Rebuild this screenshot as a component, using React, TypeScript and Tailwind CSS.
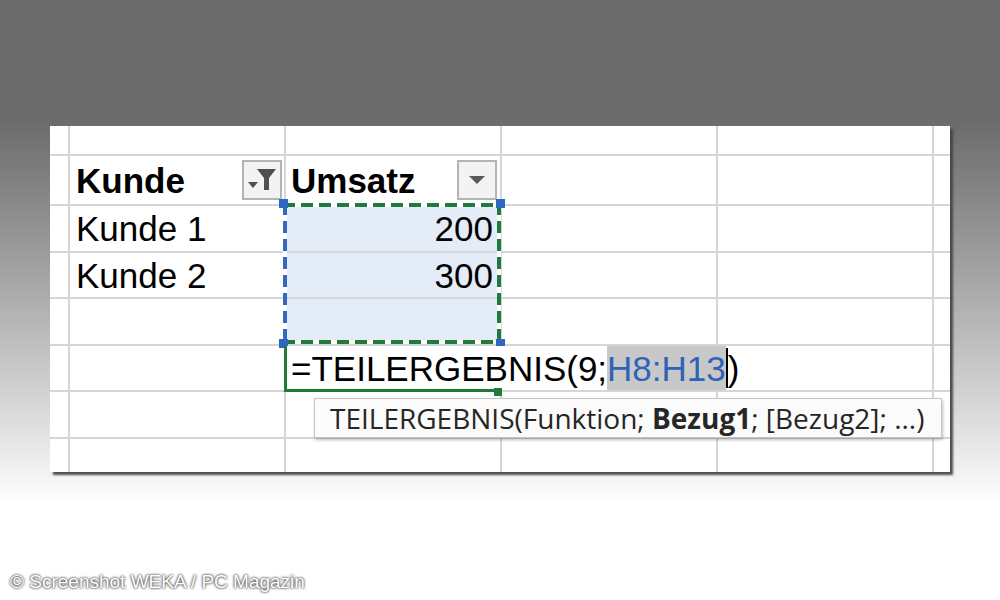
import React from "react";

// Excel-like sheet excerpt on a fading gray backdrop
const rowHeights = [28, 48, 45, 44, 45, 44, 45, 33];
const cols = 6;

const FilterButton = ({ filtered }: { filtered?: boolean }) => (
  <div className="flex h-[40px] w-[40px] shrink-0 items-center justify-center border-2 border-[#b4b4b4] bg-[#f3f3f3]">
    {filtered ? (
      <svg width="34" height="30" viewBox="0 0 34 30">
        <path d="M12 4 H31 L24 13 V25 H19 V13 Z" fill="#4f4f4f" />
        <path d="M3 17 H13 L8 23 Z" fill="#4f4f4f" />
      </svg>
    ) : (
      <svg width="22" height="14" viewBox="0 0 22 14">
        <path d="M3 3 H19 L11 11 Z" fill="#5a5a5a" />
      </svg>
    )}
  </div>
);

const cellText = "font-['Liberation_Sans',Arial,sans-serif] text-[35px] leading-none text-black";

function Cell({ r, c }: { r: number; c: number }) {
  const selected = c === 2 && r >= 2 && r <= 4;
  const base = `flex items-center ${selected ? "bg-[#e4ecf7]" : "bg-white"}`;

  if (r === 1 && c === 1)
    return (
      <div className={`${base} justify-between pl-[6px] pr-[2px]`}>
        <span className={`${cellText} font-bold`}>Kunde</span>
        <FilterButton filtered />
      </div>
    );
  if (r === 1 && c === 2)
    return (
      <div className={`${base} justify-between pl-[5px] pr-[3px]`}>
        <span className={`${cellText} font-bold`}>Umsatz</span>
        <FilterButton />
      </div>
    );
  if ((r === 2 || r === 3) && c === 1)
    return (
      <div className={`${base} pl-[6px]`}>
        <span className={cellText}>{r === 2 ? "Kunde 1" : "Kunde 2"}</span>
      </div>
    );
  if ((r === 2 || r === 3) && c === 2)
    return (
      <div className={`${base} justify-end pr-[7px]`}>
        <span className={cellText}>{r === 2 ? "200" : "300"}</span>
      </div>
    );
  return <div className={base} />;
}

export default function App() {
  return (
    <div className="relative flex h-[600px] w-[1000px] flex-col overflow-hidden bg-linear-to-b from-[#6b6b6b] from-20% to-white to-84%">
      <div className="pl-[50px] pt-[126px]">
        <div className="relative w-[900px] shadow-[3px_3px_2px_rgba(70,70,70,0.95)]">
          <div className="grid grid-cols-[18px_214px_214px_214px_214px_16px] grid-rows-[28px_48px_45px_44px_45px_44px_45px_33px] gap-[2px] bg-[#d6d6d6]">
            {rowHeights.map((_, r) =>
              Array.from({ length: cols }).map((__, c) => <Cell key={`${r}-${c}`} r={r} c={c} />)
            )}
          </div>

          {/* range reference H8:H13 with marching ants */}
          <div className="absolute left-[233px] top-[77px] h-[141px] w-[218px]">
            <div className="absolute left-0 right-0 top-0 h-[4px] bg-[repeating-linear-gradient(90deg,#1f7a3c_0_12px,#ffffff_12px_18px)]" />
            <div className="absolute bottom-0 left-0 right-0 h-[4px] bg-[repeating-linear-gradient(90deg,#1f7a3c_0_12px,#ffffff_12px_18px)]" />
            <div className="absolute bottom-0 left-0 top-0 w-[4px] bg-[repeating-linear-gradient(180deg,#3566c0_0_12px,#ffffff_12px_18px)]" />
            <div className="absolute bottom-0 right-0 top-0 w-[4px] bg-[repeating-linear-gradient(180deg,#1f7a3c_0_12px,#ffffff_12px_18px)]" />
            <div className="absolute -left-[4px] -top-[4px] h-[9px] w-[9px] bg-[#2f66c0]" />
            <div className="absolute -right-[4px] -top-[4px] h-[9px] w-[9px] bg-[#2f66c0]" />
            <div className="absolute -bottom-[4px] -left-[4px] h-[9px] w-[9px] bg-[#2f66c0]" />
            <div className="absolute -bottom-[4px] -right-[4px] h-[9px] w-[9px] bg-[#2f66c0]" />
          </div>

          {/* cell being edited */}
          <div className="absolute left-[234px] top-[220px] flex h-[44px] w-[476px] items-stretch border-l-[3px] border-[#1f7a3c] bg-white pl-[4px] font-['Liberation_Sans',Arial,sans-serif] text-[35px] leading-none">
            <span className="flex items-center text-black">=TEILERGEBNIS(9;</span>
            <span className="flex items-center bg-[#c8c8c8] text-[#2f62b8]">H8:H13</span>
            <span className="my-[2px] w-[2px] bg-black" />
            <span className="flex items-center text-black">)</span>
          </div>
          <div className="absolute left-[234px] top-[263px] h-[3px] w-[210px] bg-[#1f7a3c]" />
          <div className="absolute left-[444px] top-[262px] h-[8px] w-[8px] bg-[#1f7a3c]" />

          {/* function tooltip */}
          <div className="absolute left-[264px] top-[272px] flex h-[40px] w-[628px] items-center border border-[#c4c4c4] bg-[#fbfbfb] pl-[15px] font-['Open_Sans',sans-serif] text-[28px] leading-none text-[#262626] shadow-[1px_2px_3px_rgba(0,0,0,0.25)]">
            <span>
              TEILERGEBNIS(Funktion; <span className="font-bold">Bezug1</span>; [Bezug2]; ...)
            </span>
          </div>
        </div>
      </div>

      <div className="mt-auto pb-[9px] pl-[10px] font-['Liberation_Sans',Arial,sans-serif] text-[19px] leading-none text-white [text-shadow:0_0_3px_#3f3f3f,0_0_2px_#3f3f3f]">
        © Screenshot WEKA / PC Magazin
      </div>
    </div>
  );
}
